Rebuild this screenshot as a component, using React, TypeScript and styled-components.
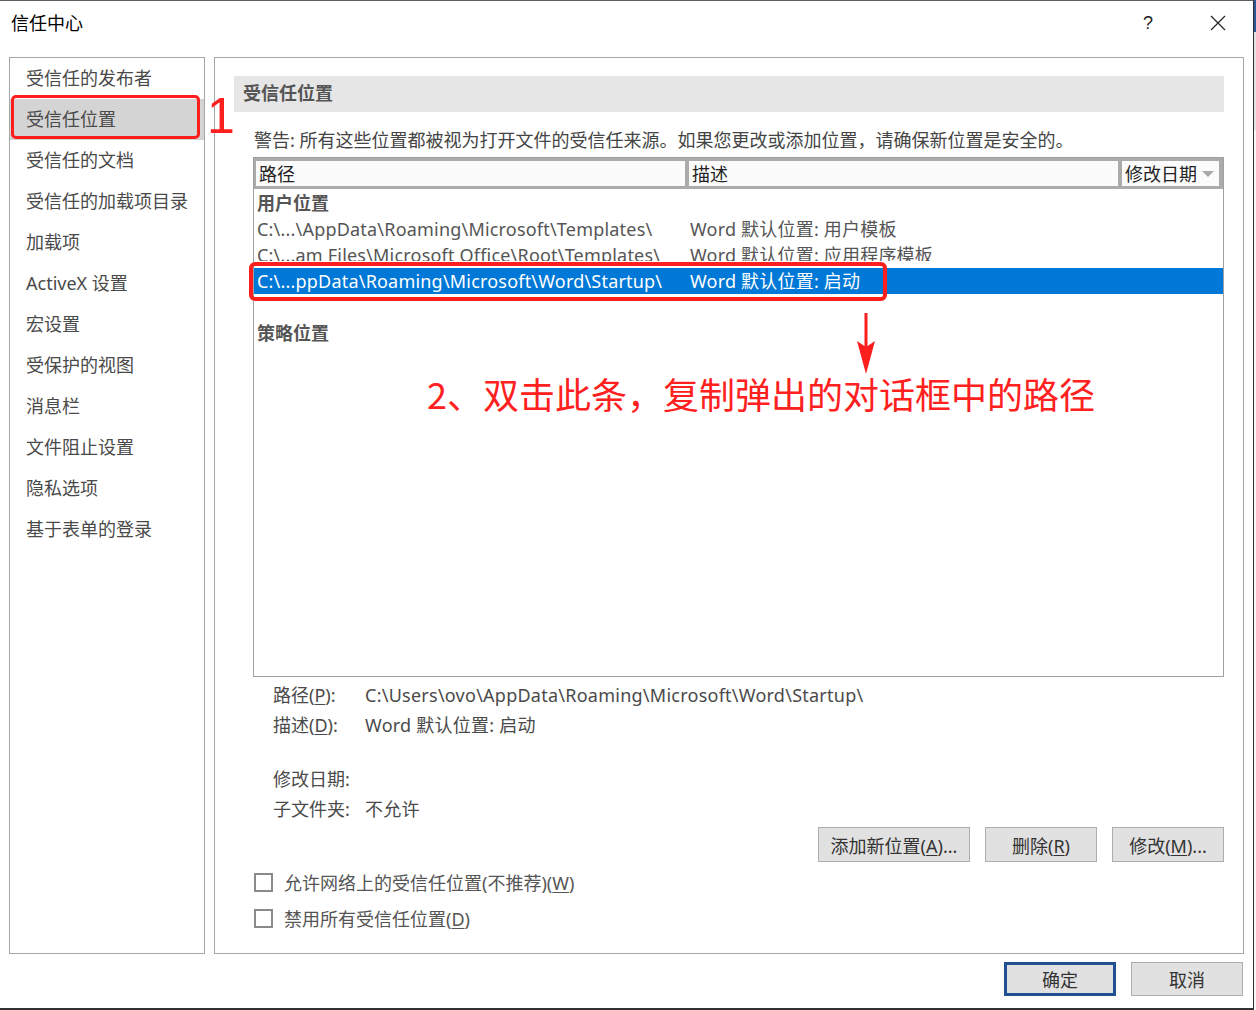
import React from 'react';
import styled, { createGlobalStyle } from 'styled-components';

const FONT = `"Noto Sans", "Noto Sans CJK SC", sans-serif`;

const GlobalStyle = createGlobalStyle`
  html, body { margin: 0; padding: 0; background: #fff; }
  body { font-family: ${FONT}; font-size: 18px; color: #444; }
  * { box-sizing: border-box; }
`;

const Screen = styled.div`
  display: flex;
  width: 1256px;
  height: 1010px;
  overflow: hidden;
`;

const Window = styled.div`
  width: 1254px;
  height: 1010px;
  display: flex;
  flex-direction: column;
  background: #fff;
  border-top: 1px solid #5e5e5e;
  border-right: 1px solid #2e2e2e;
  border-bottom: 2px solid #333;
`;

const Backdrop = styled.div`
  flex: 1;
  background: linear-gradient(#2b579a 0 32px, #e4e4e4 32px 130px, #f7f7f7 130px);
`;

const TitleBar = styled.div`
  height: 56px;
  display: flex;
  align-items: flex-start;
  padding: 10px 25px 0 11px;
`;

const Title = styled.div`
  line-height: 24px;
  color: #000;
`;

const TitleActions = styled.div`
  margin-left: auto;
  display: flex;
  align-items: center;
  height: 24px;
`;

const HelpMark = styled.span`
  width: 20px;
  text-align: center;
  color: #222;
  font-family: "Liberation Sans", sans-serif;
  font-size: 18px;
`;

const CloseButton = styled.span`
  width: 20px;
  height: 20px;
  margin-left: 50px;
  display: flex;
  align-items: center;
  justify-content: center;
`;

const Body = styled.div`
  height: 897px;
  display: flex;
  gap: 9px;
  padding: 0 9px;
`;

const Nav = styled.div`
  width: 196px;
  border: 1px solid #a6a6a6;
  display: flex;
  flex-direction: column;
`;

const NavItem = styled.div<{ $active?: boolean }>`
  position: relative;
  height: 41px;
  line-height: 41px;
  padding-left: 16px;
  color: #4a4a4a;
  background: ${p => (p.$active ? '#d4d4d4' : 'transparent')};
`;

const NavMark = styled.span`
  position: absolute;
  left: 1px;
  top: -4px;
  width: 189px;
  height: 44px;
  border: 3.5px solid #ff1e1e;
  border-radius: 5px;
`;

const StepOne = styled.span`
  position: absolute;
  left: 197px;
  top: -8px;
  font-family: "Liberation Sans", sans-serif;
  font-size: 50px;
  line-height: 50px;
  color: #ff1e1e;
`;

const Panel = styled.div`
  flex: 1;
  border: 1px solid #a6a6a6;
  padding: 18px 19px 0 19px;
  display: flex;
  flex-direction: column;
`;

const SectionHeader = styled.div`
  height: 36px;
  line-height: 34px;
  padding-left: 9px;
  background: #e6e6e6;
  font-weight: bold;
  color: #555;
`;

const Warning = styled.div`
  margin-top: 16px;
  line-height: 24px;
  padding-left: 20px;
  color: #444;
  white-space: nowrap;
`;

const ListBox = styled.div`
  position: relative;
  margin: 5px 0 0 19px;
  height: 520px;
  border: 1px solid #a0a0a0;
  display: flex;
  flex-direction: column;
`;

const ListHeader = styled.div`
  height: 31px;
  display: flex;
  gap: 4px;
  padding: 3px 3px 3px 2px;
  background: #ababab;
`;

const HeaderCell = styled.div<{ $w: number }>`
  width: ${p => p.$w}px;
  display: flex;
  align-items: center;
  line-height: 25px;
  padding: 1px 0 0 3px;
  background: #fbfbfb;
  color: #222;
`;

const SortArrow = styled.span`
  margin-left: auto;
  margin-right: 5px;
  width: 0;
  height: 0;
  border-left: 6px solid transparent;
  border-right: 6px solid transparent;
  border-top: 6px solid #a9a9a9;
`;

const ListBody = styled.div`
  flex: 1;
  padding-top: 1px;
`;

const GroupLabel = styled.div<{ $gap?: number }>`
  margin-top: ${p => p.$gap ?? 0}px;
  line-height: 26px;
  padding-left: 3px;
  font-weight: bold;
  color: #555;
`;

const Row = styled.div<{ $selected?: boolean }>`
  position: relative;
  height: 26px;
  display: grid;
  grid-template-columns: 433px 1fr;
  padding-left: 3px;
  line-height: 26px;
  letter-spacing: 0.2px;
  white-space: nowrap;
  color: ${p => (p.$selected ? '#fff' : '#555')};
  background: ${p => (p.$selected ? '#0078d7' : 'transparent')};
`;

const Cell = styled.span<{ $cut?: number }>`
  overflow: hidden;
  height: ${p => (p.$cut ? `${p.$cut}px` : 'auto')};
`;

const RowMark = styled.span`
  position: absolute;
  left: -5px;
  top: -6px;
  width: 638px;
  height: 39px;
  border: 4px solid #ff1e1e;
  border-radius: 6px;
`;

const Arrow = styled.svg`
  position: absolute;
  left: 602px;
  top: 155px;
`;

const StepTwo = styled.div`
  position: absolute;
  left: 173px;
  top: 211px;
  font-family: "Noto Sans CJK SC", sans-serif;
  font-size: 36px;
  line-height: 48px;
  color: #ff2020;
  white-space: nowrap;
`;

const Details = styled.div`
  margin-top: 3px;
  padding-left: 39px;
  display: flex;
  flex-direction: column;
`;

const DetailRow = styled.div<{ $gap?: number }>`
  display: flex;
  height: 30px;
  line-height: 30px;
  margin-top: ${p => p.$gap ?? 0}px;
  color: #4a4a4a;
  white-space: nowrap;
`;

const DetailLabel = styled.span`
  width: 92px;
`;

const DetailValue = styled.span`
  letter-spacing: 0.25px;
`;

const U = styled.span`
  text-decoration: underline;
  text-underline-offset: 2px;
`;

const ButtonRow = styled.div`
  margin-top: 3px;
  display: flex;
  justify-content: flex-end;
  gap: 15px;
`;

const Button = styled.button<{ $w: number; $primary?: boolean }>`
  width: ${p => p.$w}px;
  height: ${p => (p.$primary !== undefined ? 34 : 35)}px;
  padding: 0;
  background: #e1e1e1;
  border: ${p => (p.$primary ? '3px solid #23508f' : '1px solid #adadad')};
  font-family: ${FONT};
  font-size: 18px;
  color: #333;
`;

const CheckRow = styled.label<{ $gap?: number }>`
  margin-top: ${p => p.$gap ?? 0}px;
  height: 36px;
  display: flex;
  align-items: center;
  gap: 11px;
  padding-left: 20px;
  color: #555;
`;

const CheckBox = styled.span`
  width: 19px;
  height: 19px;
  border: 2px solid #8a8a8a;
  background: #fff;
`;

const Footer = styled.div`
  height: 54px;
  display: flex;
  justify-content: flex-end;
  gap: 15px;
  padding: 8px 10px 0 0;
`;

const navItems = [
  '受信任的发布者',
  '受信任位置',
  '受信任的文档',
  '受信任的加载项目录',
  '加载项',
  'ActiveX 设置',
  '宏设置',
  '受保护的视图',
  '消息栏',
  '文件阻止设置',
  '隐私选项',
  '基于表单的登录',
];

export default function App() {
  return (
    <Screen>
      <GlobalStyle />
      <Window>
        <TitleBar>
          <Title>信任中心</Title>
          <TitleActions>
            <HelpMark>?</HelpMark>
            <CloseButton>
              <svg width="16" height="16" viewBox="0 0 16 16">
                <path d="M1 1 L15 15 M15 1 L1 15" stroke="#222" strokeWidth="1.2" fill="none" />
              </svg>
            </CloseButton>
          </TitleActions>
        </TitleBar>

        <Body>
          <Nav>
            {navItems.map(item => (
              <NavItem key={item} $active={item === '受信任位置'}>
                {item}
                {item === '受信任位置' && (
                  <>
                    <NavMark />
                    <StepOne>1</StepOne>
                  </>
                )}
              </NavItem>
            ))}
          </Nav>

          <Panel>
            <SectionHeader>受信任位置</SectionHeader>
            <Warning>警告: 所有这些位置都被视为打开文件的受信任来源。如果您更改或添加位置，请确保新位置是安全的。</Warning>

            <ListBox>
              <ListHeader>
                <HeaderCell $w={429}>路径</HeaderCell>
                <HeaderCell $w={429}>描述</HeaderCell>
                <HeaderCell $w={97}>
                  修改日期
                  <SortArrow />
                </HeaderCell>
              </ListHeader>
              <ListBody>
                <GroupLabel>用户位置</GroupLabel>
                <Row>
                  <Cell>C:\...\AppData\Roaming\Microsoft\Templates\</Cell>
                  <Cell>Word 默认位置: 用户模板</Cell>
                </Row>
                <Row>
                  <Cell $cut={19}>C:\...am Files\Microsoft Office\Root\Templates\</Cell>
                  <Cell $cut={19}>Word 默认位置: 应用程序模板</Cell>
                </Row>
                <Row $selected>
                  <Cell>C:\...ppData\Roaming\Microsoft\Word\Startup\</Cell>
                  <Cell>Word 默认位置: 启动</Cell>
                  <RowMark />
                </Row>
                <GroupLabel $gap={26}>策略位置</GroupLabel>
              </ListBody>
              <Arrow width="20" height="62" viewBox="0 0 20 62">
                <path d="M10 0 L10 40" stroke="#ff1e1e" strokeWidth="3" />
                <path d="M10 61 L1 28 L10 34 L19 28 Z" fill="#ff1e1e" />
              </Arrow>
              <StepTwo>2、双击此条，复制弹出的对话框中的路径</StepTwo>
            </ListBox>

            <Details>
              <DetailRow>
                <DetailLabel>路径(<U>P</U>):</DetailLabel>
                <DetailValue>C:\Users\ovo\AppData\Roaming\Microsoft\Word\Startup\</DetailValue>
              </DetailRow>
              <DetailRow>
                <DetailLabel>描述(<U>D</U>):</DetailLabel>
                <DetailValue>Word 默认位置: 启动</DetailValue>
              </DetailRow>
              <DetailRow $gap={24}>
                <DetailLabel>修改日期:</DetailLabel>
                <DetailValue></DetailValue>
              </DetailRow>
              <DetailRow>
                <DetailLabel>子文件夹:</DetailLabel>
                <DetailValue>不允许</DetailValue>
              </DetailRow>
            </Details>

            <ButtonRow>
              <Button $w={152}>添加新位置(<U>A</U>)...</Button>
              <Button $w={112}>删除(<U>R</U>)</Button>
              <Button $w={112}>修改(<U>M</U>)...</Button>
            </ButtonRow>

            <CheckRow $gap={2}>
              <CheckBox />
              <span>允许网络上的受信任位置(不推荐)(<U>W</U>)</span>
            </CheckRow>
            <CheckRow>
              <CheckBox />
              <span>禁用所有受信任位置(<U>D</U>)</span>
            </CheckRow>
          </Panel>
        </Body>

        <Footer>
          <Button $w={112} $primary>确定</Button>
          <Button $w={112} $primary={false}>取消</Button>
        </Footer>
      </Window>
      <Backdrop />
    </Screen>
  );
}
